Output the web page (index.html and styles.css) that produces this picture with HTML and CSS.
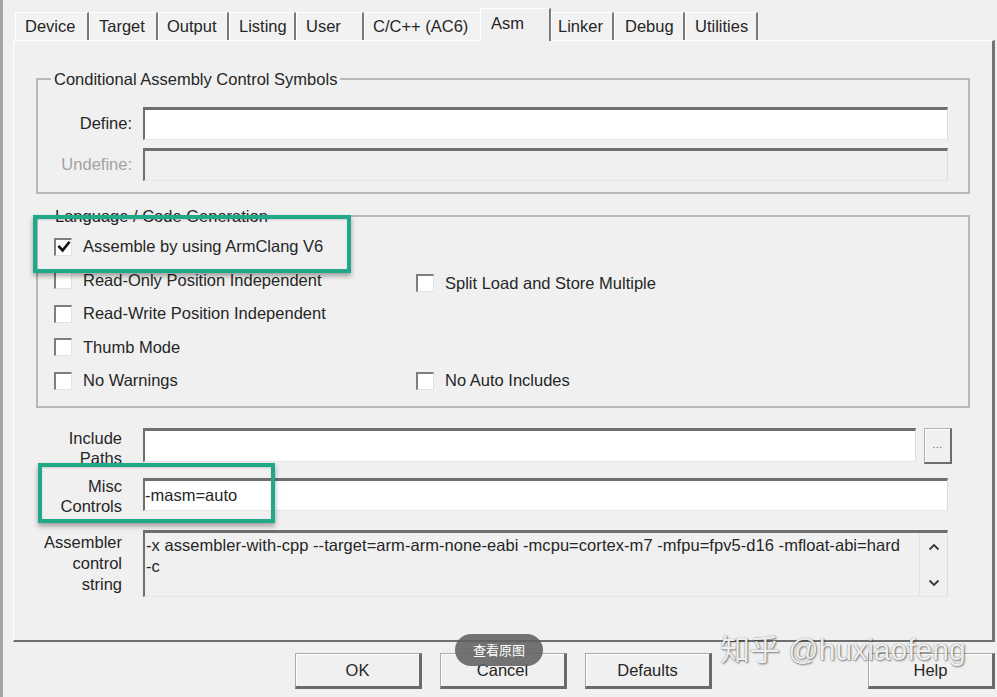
FILE: index.html
```html
<!DOCTYPE html>
<html lang="en">
<head>
<meta charset="utf-8">
<title>Options for Target - Asm</title>
<link rel="stylesheet" href="styles.css">
</head>
<body>
<div class="window">
  <div class="tabs">
    <div class="tab t-device">Device</div>
    <div class="tab t-target">Target</div>
    <div class="tab t-output">Output</div>
    <div class="tab t-listing">Listing</div>
    <div class="tab t-user">User</div>
    <div class="tab t-cpp">C/C++ (AC6)</div>
    <div class="tab t-asm active">Asm</div>
    <div class="tab t-linker">Linker</div>
    <div class="tab t-debug">Debug</div>
    <div class="tab t-util">Utilities</div>
  </div>

  <div class="panel">
    <fieldset class="group g1">
      <legend>Conditional Assembly Control Symbols</legend>
      <div class="field-row">
        <span class="lbl">Define:</span>
        <div class="input"></div>
      </div>
      <div class="field-row second">
        <span class="lbl disabled">Undefine:</span>
        <div class="input readonly"></div>
      </div>
    </fieldset>

    <fieldset class="group g2">
      <legend>Language / Code Generation</legend>
      <div class="checks">
        <div class="check"><span class="box"><svg class="tick" viewBox="0 0 14 14" width="14" height="14"><path d="M2.3 6.8 L5.6 10.4 L11.8 2.8" fill="none" stroke="#111" stroke-width="2.6" stroke-linecap="square"/></svg></span>Assemble by using ArmClang V6</div>
        <div class="check empty"></div>
        <div class="check"><span class="box"></span>Read-Only Position Independent</div>
        <div class="check split"><span class="box"></span>Split Load and Store Multiple</div>
        <div class="check"><span class="box"></span>Read-Write Position Independent</div>
        <div class="check empty"></div>
        <div class="check"><span class="box"></span>Thumb Mode</div>
        <div class="check empty"></div>
        <div class="check"><span class="box"></span>No Warnings</div>
        <div class="check"><span class="box"></span>No Auto Includes</div>
      </div>
    </fieldset>

    <div class="misc">
      <div class="mrow r-include">
        <span class="mlbl">Include<br>Paths</span>
        <div class="include-field">
          <div class="input"></div>
          <div class="browse">...</div>
        </div>
      </div>
      <div class="mrow r-misc">
        <span class="mlbl">Misc<br>Controls</span>
        <div class="input wide"><span class="val">-masm=auto</span></div>
      </div>
      <div class="mrow r-asm">
        <span class="mlbl">Assembler<br>control<br>string</span>
        <div class="textarea">
          <div class="ta-text">-x assembler-with-cpp --target=arm-arm-none-eabi -mcpu=cortex-m7 -mfpu=fpv5-d16 -mfloat-abi=hard<br>-c</div>
          <div class="scroll">
            <svg viewBox="0 0 12 8" width="12" height="8"><polyline points="1.5,6.5 6,2 10.5,6.5" fill="none" stroke="#3a3a3a" stroke-width="1.8"/></svg>
            <svg viewBox="0 0 12 8" width="12" height="8"><polyline points="1.5,1.5 6,6 10.5,1.5" fill="none" stroke="#3a3a3a" stroke-width="1.8"/></svg>
          </div>
        </div>
      </div>
    </div>
  </div>

  <div class="footer">
    <div class="btn">OK</div>
    <div class="btn">Cancel</div>
    <div class="btn">Defaults</div>
    <div class="btn help">Help</div>
  </div>

  <div class="mark mark-1"></div>
  <div class="mark mark-2"></div>
  <div class="pill">查看原图</div>
  <div class="watermark">知乎 @huxiaofeng</div>
</div>
</body>
</html>
```
FILE: styles.css
```css
* { box-sizing: border-box; }
html, body { margin: 0; padding: 0; }
body {
  background: #f0f0f0;
  font-family: "Liberation Sans", Arial, "Noto Sans CJK SC", sans-serif;
  font-size: 16.5px;
  color: #262626;
}
.window {
  position: relative;
  width: 997px;
  height: 697px;
  border-left: 3px solid #a3a3a3;
  overflow: hidden;
}

/* Tabs */
.tabs {
  display: flex;
  align-items: flex-end;
  height: 40px;
  padding-left: 12px;
}
.tab {
  height: 28px;
  line-height: 27px;
  padding-left: 9px;
  border-top: 1px solid #ffffff;
  border-left: 1px solid #ffffff;
  border-right: 2px solid #7a7a7a;
  background: #f2f2f2;
  white-space: nowrap;
  overflow: hidden;
}
.tab.active {
  position: relative;
  z-index: 1;
  height: 33px;
  margin-bottom: -1px;
  line-height: 28px;
  padding-left: 10px;
  background: #f0f0f0;
}
.t-device { width: 74px; padding-left: 9px; }
.t-target { width: 69px; }
.t-output { width: 71px; padding-left: 8px; }
.t-listing { width: 67px; }
.t-user { width: 68px; }
.t-cpp { width: 116px; padding-left: 8px; border-right: none; }
.t-asm { width: 71px; }
.t-linker { width: 63px; padding-left: 6px; }
.t-debug { width: 71px; padding-left: 10px; }
.t-util { width: 73px; padding-left: 9px; }

/* Panel */
.panel {
  margin-left: 10px;
  width: 982px;
  height: 602px;
  border-top: 1px solid #ffffff;
  border-left: 1px solid #ffffff;
  border-right: 3px solid #747474;
  border-bottom: 2px solid #6e6e6e;
}

.group {
  margin: 0;
  border: 2px solid #b8b8b8;
  min-width: 0;
  width: 934px;
}
.group legend {
  padding: 0 3px;
  height: 20px;
  line-height: 20px;
  white-space: nowrap;
}
.g1 {
  margin: 28px 0 0 22px;
  padding: 18px 20px 11px 0;
}
.g1 legend { margin-left: 13px; }
.g2 {
  margin: 12px 0 0 22px;
  padding: 4px 0 8.5px 16px;
}
.g2 legend { margin-left: -2px; }

.field-row {
  display: grid;
  grid-template-columns: 94px 1fr;
  column-gap: 11px;
  height: 33px;
}
.field-row.second { margin-top: 8px; }
.lbl {
  text-align: right;
  line-height: 33px;
}
.lbl.disabled { color: #a2a2a2; }

.input {
  height: 33px;
  background: #ffffff;
  border-top: 3px solid #6f6f6f;
  border-left: 2px solid #6f6f6f;
  border-right: 1px solid #dcdcdc;
  border-bottom: 1px solid #e6e6e6;
}
.input.readonly { background: #f0f0f0; }

/* Check boxes */
.checks {
  display: grid;
  grid-template-columns: 362px 1fr;
  grid-auto-rows: 33.5px;
}
.check {
  display: flex;
  align-items: center;
  gap: 11px;
  white-space: nowrap;
}
.check.split { padding-top: 6px; }
.box {
  width: 18px;
  height: 18px;
  flex: none;
  background: #ffffff;
  border-top: 2px solid #7e7e7e;
  border-left: 2px solid #7e7e7e;
  border-right: 1px solid #e2e2e2;
  border-bottom: 1px solid #e2e2e2;
  display: flex;
  align-items: center;
  justify-content: center;
}
.tick { display: block; }

/* Misc section */
.misc {
  margin-top: 20px;
  padding-left: 22px;
}
.mrow {
  display: flex;
  align-items: flex-start;
}
.mlbl {
  width: 86px;
  margin-right: 21px;
  text-align: right;
  line-height: 20px;
  flex: none;
}
.r-include { height: 34px; }
.r-misc { height: 33px; margin-top: 16px; }
.r-misc .mlbl { margin-top: -2px; }
.r-asm { height: 67px; margin-top: 19px; }
.r-asm .mlbl { margin-top: 2px; line-height: 21px; }

.include-field {
  display: flex;
  gap: 8px;
  width: 809px;
}
.include-field .input { flex: 1; height: 34px; }
.browse {
  width: 28px;
  height: 36px;
  flex: none;
  background: #f0f0f0;
  border-top: 1px solid #b0b0b0;
  border-left: 1px solid #b0b0b0;
  border-right: 2px solid #6c6c6c;
  border-bottom: 2px solid #6c6c6c;
  box-shadow: inset 1px 1px 0 #ffffff;
  font-size: 11px;
  color: #6a6a6a;
  text-align: center;
  line-height: 30px;
  letter-spacing: 0.5px;
}
.input.wide { width: 805px; }
.val {
  display: block;
  padding-left: 0;
  line-height: 28px;
}

.textarea {
  width: 805px;
  height: 67px;
  display: flex;
  background: #f0f0f0;
  border-top: 3px solid #6f6f6f;
  border-left: 2px solid #6f6f6f;
  border-right: 1px solid #dcdcdc;
  border-bottom: 1px solid #e6e6e6;
}
.ta-text {
  flex: 1;
  padding: 2px 0 0 1px;
  line-height: 21px;
  white-space: nowrap;
  overflow: hidden;
  letter-spacing: 0.05px;
}
.scroll {
  width: 28px;
  flex: none;
  border-left: 1px solid #e4e4e4;
  display: flex;
  flex-direction: column;
  align-items: center;
  justify-content: space-between;
  padding: 10px 0 9px;
}
.scroll svg { display: block; }

/* Footer */
.footer {
  display: flex;
  gap: 18px;
  margin-top: 11px;
  padding-left: 292px;
  padding-right: 2px;
}
.btn {
  width: 127px;
  height: 36px;
  background: #f0f0f0;
  border-top: 1px solid #a9a9a9;
  border-left: 1px solid #a9a9a9;
  border-right: 3px solid #6a6a6a;
  border-bottom: 3px solid #6a6a6a;
  box-shadow: inset 1px 1px 0 #ffffff;
  text-align: center;
  line-height: 32px;
}
.btn.help { margin-left: auto; }

/* Overlays (annotations) */
.mark {
  position: absolute;
  border: 4px solid #20a888;
  box-shadow: 0 3px 5px rgba(0, 0, 0, 0.35), inset 0 1px 2px rgba(0, 0, 0, 0.15);
}
.mark-1 { left: 30px; top: 215px; width: 318px; height: 58px; }
.mark-2 { left: 35px; top: 463px; width: 237px; height: 60px; }

.pill {
  position: absolute;
  left: 452px;
  top: 634px;
  width: 88px;
  height: 32px;
  border-radius: 16px;
  background: rgba(96, 96, 96, 0.88);
  color: #ffffff;
  font-family: "Noto Sans CJK SC", sans-serif;
  font-size: 13px;
  line-height: 32px;
  text-align: center;
}
.watermark {
  position: absolute;
  left: 717px;
  top: 630px;
  font-family: "Liberation Sans", "Noto Sans CJK SC", sans-serif;
  font-size: 30px;
  line-height: 40px;
  color: rgba(255, 255, 255, 0.93);
  text-shadow: 0 0 1px rgba(0, 0, 0, 0.55), 1px 1px 2px rgba(0, 0, 0, 0.45);
  white-space: nowrap;
}
```
